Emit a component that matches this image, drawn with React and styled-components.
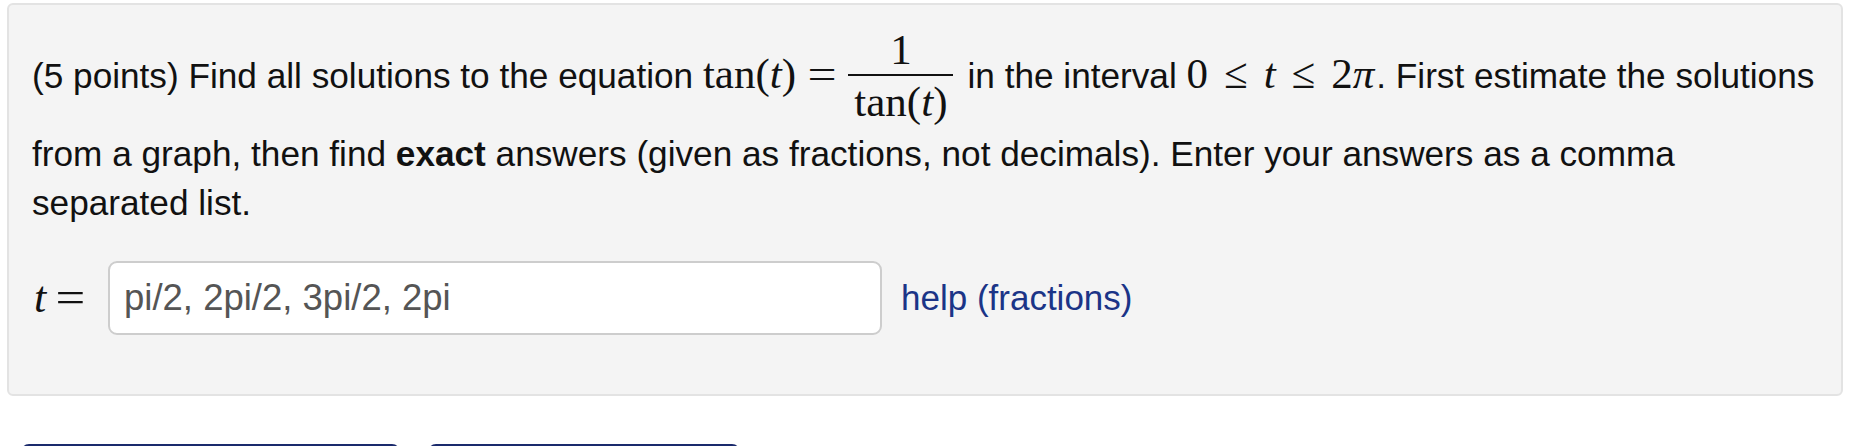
import React from "react";
import styled, { createGlobalStyle } from "styled-components";

const GlobalStyle = createGlobalStyle`
  html, body {
    margin: 0;
    padding: 0;
    background: #fff;
    overflow: hidden;
  }
  body {
    font-family: "Liberation Sans", Arial, Helvetica, sans-serif;
    color: #111;
  }
`;

const Page = styled.div`
  padding: 3px 13px 0 7px;
`;

const Well = styled.div`
  background: #f4f4f4;
  border: 2px solid #e3e3e3;
  border-radius: 6px;
  padding: 22px 22px 59px 23px;
`;

const Question = styled.p`
  margin: 0;
  font-size: 35.2px;
  line-height: 49px;
`;

const Math = styled.span`
  font-family: "Liberation Serif", "Times New Roman", serif;
  font-size: 43px;
  white-space: nowrap;
`;

const Var = styled.i`
  font-family: "Liberation Serif", "Times New Roman", serif;
  font-style: italic;
  margin-right: ${(p) => p.$after || "0"};
`;

const Rel = styled.span`
  display: inline-block;
  margin: 0 ${(p) => p.$space || "12px"};
  transform: scaleX(${(p) => p.$stretch || 1});
`;

const Frac = styled.span`
  display: inline-flex;
  flex-direction: column;
  align-items: center;
  vertical-align: 0.55em;
  margin: 0 20px 0 6px;
  line-height: 1.05;
`;

const Bar = styled.span`
  align-self: stretch;
  height: 2px;
  background: #111;
  margin: 2px -6px 3px;
`;

const Den = styled.span`
  padding-bottom: 5px;
`;

const Row = styled.div`
  display: flex;
  align-items: center;
  margin-top: 33.5px;
`;

const Label = styled.span`
  font-family: "Liberation Serif", "Times New Roman", serif;
  font-size: 44px;
  margin-left: 2px;
  width: 74px;
  flex: none;
`;

const Input = styled.input`
  box-sizing: border-box;
  width: 774px;
  height: 74px;
  padding: 0 14px;
  border: 2px solid #cdcdcd;
  border-radius: 9px;
  background: #fff;
  font-family: "Liberation Sans", Arial, sans-serif;
  font-size: 36.5px;
  color: #555;
  outline: none;
`;

const HelpLink = styled.a`
  margin-left: 19px;
  font-size: 35px;
  color: #1b3487;
  text-decoration: none;
`;

const Buttons = styled.div`
  display: flex;
  gap: 28px;
  margin: 48px 0 0 14px;
`;

const Button = styled.button`
  width: ${(p) => p.$w}px;
  height: 60px;
  border: none;
  border-radius: 8px;
  background: #1a2a6c;
`;

export default function App() {
  return (
    <>
      <GlobalStyle />
      <Page>
        <Well>
          <Question>
            (5 points) Find all solutions to the equation{" "}
            <Math>
              tan(<Var>t</Var>)
              <Rel $space="14px" $stretch={1.2}>
                =
              </Rel>
              <Frac>
                <span>1</span>
                <Bar />
                <Den>
                  tan(<Var>t</Var>)
                </Den>
              </Frac>
            </Math>
            in the interval{" "}
            <Math>
              0<Rel $space="16px">≤</Rel>
              <Var>t</Var>
              <Rel $space="16px">≤</Rel>2<Var $after="2px">π</Var>
            </Math>
            . First estimate the solutions from a graph, then find{" "}
            <b>exact</b> answers (given as fractions, not decimals). Enter your
            answers as a comma separated list.
          </Question>
          <Row>
            <Label>
              <Var>t</Var>
              <Rel $space="12px" $stretch={1.2}>
                =
              </Rel>
            </Label>
            <Input defaultValue="pi/2, 2pi/2, 3pi/2, 2pi" />
            <HelpLink href="#">help (fractions)</HelpLink>
          </Row>
        </Well>
        <Buttons>
          <Button $w={379} />
          <Button $w={312} />
        </Buttons>
      </Page>
    </>
  );
}
